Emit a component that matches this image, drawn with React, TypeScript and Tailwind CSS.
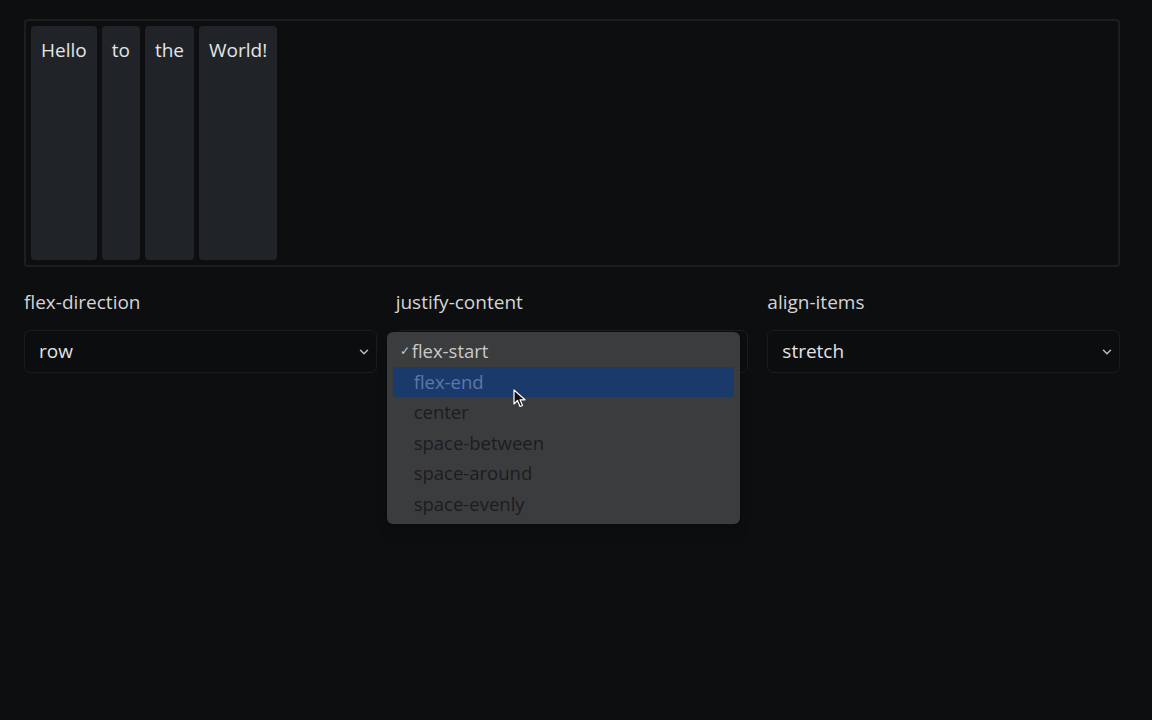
import { ChevronDown } from "lucide-react";

const words = ["Hello", "to", "the", "World!"];

const menuItems = ["flex-start", "flex-end", "center", "space-between", "space-around", "space-evenly"];

function Field({ label, value, children }: { label: string; value: string; children?: React.ReactNode }) {
  return (
    <div className="relative flex flex-col gap-[16px]">
      <label className="text-[19px] font-medium leading-6 text-[#d4d4d6]">{label}</label>
      <div className="flex h-[43px] items-center justify-between rounded-md border border-[#1a1c1f] bg-[#0c0d0f] pl-[14px] pr-[5px]">
        <span className="text-[19px] font-medium text-[#e2e2e4]">{value}</span>
        <ChevronDown className="h-[14px] w-[14px] text-[#bdbdc0]" strokeWidth={2.5} />
      </div>
      {children}
    </div>
  );
}

export default function App() {
  return (
    <div
      className="min-h-screen bg-[#0d0e10] pl-6 pr-8 pt-[19px]"
      style={{ fontFamily: '"Open Sans", "Liberation Sans", sans-serif' }}
    >
      <div className="flex h-[248px] gap-[5px] rounded-sm border-2 border-[#1c1e21] bg-[#0d0e10] p-[5px]">
        {words.map((w) => (
          <div key={w} className="rounded-sm bg-[#202428] px-[10px] pt-[12px] text-[19px] font-medium leading-6 text-[#e4e4e6]">
            {w}
          </div>
        ))}
      </div>

      <div className="mt-[23px] grid grid-cols-3 gap-[19px]">
        <Field label="flex-direction" value="row" />
        <Field label="justify-content" value="flex-start">
          <div className="absolute left-[-9px] top-[42px] w-[353px] rounded-md bg-[#3b3c3e] px-[6px] pb-[5px] pt-[4px] shadow-lg">
            {menuItems.map((m, i) => (
              <div
                key={m}
                className={
                  "flex h-[30.5px] items-center rounded-[3px] text-[18.5px] " +
                  (i === 1 ? "bg-[#1b3a6c] pl-[21px] text-[#5a79a8]" : i === 0 ? "pl-[7px] text-[#c9c9cb]" : "pl-[21px] text-[#1c1d1f]")
                }
              >
                {i === 0 && <span className="mr-[2px] text-[12px] text-[#c9c9cb]">✓</span>}
                {m}
              </div>
            ))}
            <svg className="absolute left-[126px] top-[57px]" width="14" height="20" viewBox="0 0 14 20">
              <path d="M1 1 L1 15 L4.5 11.5 L7 17.5 L9.5 16.5 L7 10.8 L12 10.8 Z" fill="#111" stroke="#fff" strokeWidth="1.2" strokeLinejoin="round" />
            </svg>
          </div>
        </Field>
        <Field label="align-items" value="stretch" />
      </div>
    </div>
  );
}
